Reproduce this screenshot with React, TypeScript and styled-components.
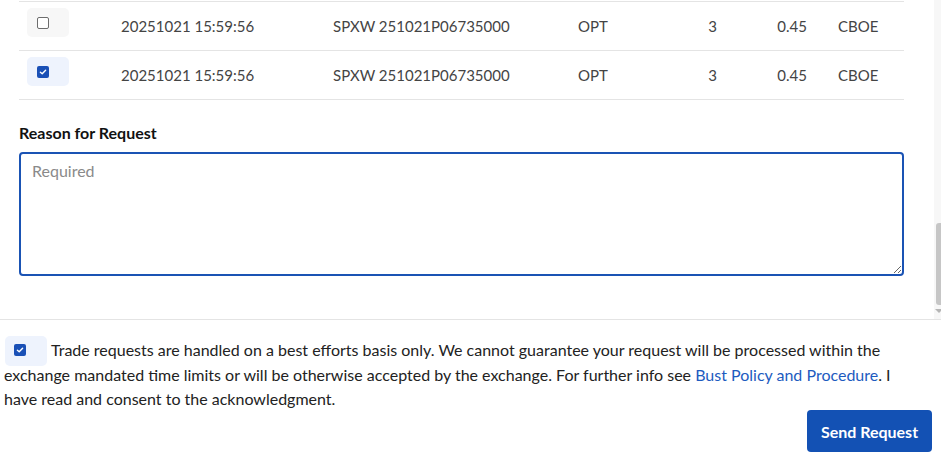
import React, { useState } from 'react'
import styled, { createGlobalStyle } from 'styled-components'

const GlobalStyle = createGlobalStyle`
    html, body {
        margin: 0;
        padding: 0;
        background: #ffffff;
    }
    body {
        font-family: Lato, "Open Sans", sans-serif;
        color: #222222;
    }
    * {
        box-sizing: border-box;
    }
`

const Wrapper = styled.div`
    width: 941px;
    height: 465px;
    display: flex;
    flex-direction: column;
    background: #ffffff;
    overflow: hidden;
`

const Upper = styled.div`
    height: 320px;
    flex: none;
    display: flex;
    flex-direction: row;
    border-bottom: 1px solid #e4e4e4;
`

const Content = styled.div`
    flex: 1;
    min-width: 0;
    padding: 1px 30px 0 19px;
`

const Track = styled.div`
    width: 7px;
    flex: none;
    display: flex;
    flex-direction: column;
    justify-content: flex-end;
    align-items: flex-end;
    gap: 4px;
    padding-bottom: 6px;
    background: #f7f7f7;
`

const Thumb = styled.div`
    width: 5px;
    height: 82px;
    background: #c6c6c6;
    border-radius: 3px 0 0 3px;
`

const Arrow = styled.div`
    width: 0;
    height: 0;
    border-left: 4px solid transparent;
    border-right: 4px solid transparent;
    border-top: 4px solid #b5b5b5;
    margin-right: -2px;
`

const Table = styled.div`
    display: flex;
    flex-direction: column;
    border-top: 1px solid #e4e4e4;
`

const Row = styled.div`
    display: grid;
    grid-template-columns: 102px 212px 245px 100px 39px 90px 1fr;
    align-items: center;
    height: 49px;
    border-bottom: 1px solid #e4e4e4;
    font-size: 15px;
    color: #444444;
    .right {
        text-align: right;
    }
    .exch {
        padding-left: 31px;
    }
`

const CheckCell = styled.label<{ $checked: boolean }>`
    display: inline-flex;
    align-items: flex-start;
    width: 42px;
    height: 29px;
    padding: 9px 0 0 10px;
    border-radius: 5px;
    background: ${(p) => (p.$checked ? '#eef3fd' : '#f7f7f7')};
    cursor: pointer;
`

const RowCheck = styled(CheckCell)`
    margin: -7px 0 0 8px;
`

const Box = styled.span<{ $checked: boolean }>`
    width: 12px;
    height: 12px;
    border-radius: 2px;
    display: flex;
    align-items: center;
    justify-content: center;
    border: ${(p) => (p.$checked ? 'none' : '1.5px solid #6d6d6d')};
    background: ${(p) => (p.$checked ? '#1a50b6' : '#ffffff')};
`

const Label = styled.div`
    margin: 23px 0 9px 0;
    font-size: 16px;
    font-weight: 700;
    line-height: 20px;
    color: #111111;
`

const Reason = styled.textarea`
    display: block;
    width: 100%;
    height: 124px;
    border: 2px solid #1a53b4;
    border-radius: 4px;
    padding: 7px 11px;
    font-family: Lato, "Open Sans", sans-serif;
    font-size: 16px;
    color: #222222;
    outline: none;
    resize: vertical;
    &::placeholder {
        color: #8a8a8a;
    }
`

const Footer = styled.div`
    flex: 1;
    display: flex;
    flex-direction: column;
    padding: 18px 9px 0 4px;
`

const Consent = styled.p`
    margin: 0;
    padding-right: 22px;
    font-size: 16px;
    line-height: 24px;
    color: #222222;
    a {
        color: #1d5bc0;
        text-decoration: none;
    }
`

const ConsentCheck = styled(CheckCell)`
    vertical-align: middle;
    height: 30px;
    margin: -4px 4px -3px 1px;
    padding: 8px 0 0 9px;
`

const Actions = styled.div`
    display: flex;
    justify-content: flex-end;
    margin-top: -1px;
`

const SendButton = styled.button`
    width: 125px;
    height: 42px;
    border: none;
    border-radius: 4px;
    background: #1351b4;
    color: #ffffff;
    font-family: Lato, "Open Sans", sans-serif;
    font-size: 16px;
    font-weight: 700;
    cursor: pointer;
`

const Check = ({ checked }: { checked: boolean }) => (
    <Box $checked={checked}>
        {checked && (
            <svg width="8" height="8" viewBox="0 0 8 8">
                <path d="M1.4 4.2 L3.2 5.8 L6.6 2.2" fill="none" stroke="#ffffff" strokeWidth="1.4" strokeLinecap="round" strokeLinejoin="round" />
            </svg>
        )}
    </Box>
)

const App = () => {
    const [agree, setAgree] = useState(true)
    const [rows, setRows] = useState([
        { id: 1, time: '20251021 15:59:56', symbol: 'SPXW 251021P06735000', type: 'OPT', qty: 3, price: '0.45', exch: 'CBOE', checked: false },
        { id: 2, time: '20251021 15:59:56', symbol: 'SPXW 251021P06735000', type: 'OPT', qty: 3, price: '0.45', exch: 'CBOE', checked: true },
    ])

    const toggle = (id: number) =>
        setRows((list) => list.map((r) => (r.id === id ? { ...r, checked: !r.checked } : r)))

    return (
        <Wrapper>
            <GlobalStyle />
            <Upper>
                <Content>
                    <Table>
                        {rows.map((r) => (
                            <Row key={r.id}>
                                <RowCheck $checked={r.checked} onClick={() => toggle(r.id)}>
                                    <Check checked={r.checked} />
                                </RowCheck>
                                <span>{r.time}</span>
                                <span>{r.symbol}</span>
                                <span>{r.type}</span>
                                <span className="right">{r.qty}</span>
                                <span className="right">{r.price}</span>
                                <span className="exch">{r.exch}</span>
                            </Row>
                        ))}
                    </Table>
                    <Label>Reason for Request</Label>
                    <Reason placeholder="Required" />
                </Content>
                <Track>
                    <Thumb />
                    <Arrow />
                </Track>
            </Upper>
            <Footer>
                <Consent>
                    <ConsentCheck $checked={agree} onClick={() => setAgree(!agree)}>
                        <Check checked={agree} />
                    </ConsentCheck>
                    Trade requests are handled on a best efforts basis only. We cannot guarantee your request will be processed within the exchange mandated time limits or will be otherwise accepted by the exchange. For further info see{' '}
                    <a href="#">Bust Policy and Procedure</a>. I have read and consent to the acknowledgment.
                </Consent>
                <Actions>
                    <SendButton>Send Request</SendButton>
                </Actions>
            </Footer>
        </Wrapper>
    )
}

export default React.memo(App)
